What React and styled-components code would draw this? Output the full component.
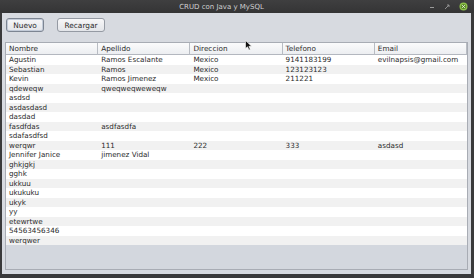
import React from 'react';
import styled, { createGlobalStyle } from 'styled-components';

const GlobalStyle = createGlobalStyle`
  html, body {
    margin: 0;
    padding: 0;
    background: #2e2e2e;
  }
`

const Window = styled.div`
  position: relative;
  width: 474px;
  height: 278px;
  display: flex;
  flex-direction: column;
  background: #3a3a3b;
  font-family: "DejaVu Sans", Verdana, sans-serif;
  overflow: hidden;
`
const TitleBar = styled.div`
  height: 13px;
  display: flex;
  align-items: center;
  padding: 0 6px 0 0;
  background: linear-gradient(#3f3f40, #343435);
`
const Title = styled.div`
  flex: 1;
  text-align: center;
  padding-left: 14px;
  font-size: 7px;
  color: #cfd0d2;
`
const Controls = styled.div`
  display: flex;
  align-items: center;
  gap: 9px;
`
const Content = styled.div`
  flex: 1;
  display: flex;
  flex-direction: column;
  margin: 0 3px 4px 2px;
  padding: 5px 3px 4px 3px;
  background: #d7dae0;
`
const Toolbar = styled.div`
  display: flex;
  gap: 13px;
  padding-left: 1px;
`
const Button = styled.button`
  height: 14px;
  width: ${p => p.$w}px;
  padding: 0;
  border-radius: 3px;
  border: 1px solid ${p => (p.$focused ? '#7d8592' : '#959aa3')};
  box-shadow: ${p => (p.$focused ? 'inset 0 0 0 1px #c3cbd8' : 'none')};
  background: linear-gradient(#f7f7f8, #e3e5e9);
  font-family: "DejaVu Sans", Verdana, sans-serif;
  font-size: 7.4px;
  color: #2b2b2b;
`
const ScrollPane = styled.div`
  flex: 1;
  margin-top: 10px;
  border: 1px solid #a8acb4;
  background: #d3d7de;
  display: flex;
  flex-direction: column;
`
const Grid = styled.div`
  display: grid;
  grid-template-columns: repeat(5, 1fr);
`
const HeadCell = styled.div`
  height: 12px;
  box-sizing: border-box;
  padding-left: 3px;
  line-height: 12px;
  font-size: 7.3px;
  color: #2c2c2c;
  background: linear-gradient(#fbfbfc, #eceef1);
  border-right: 1px solid #b8bcc3;
  border-bottom: 1px solid #b3b7bf;
  &:last-child { border-right: none; }
`
const Cell = styled.div`
  height: 9.5px;
  line-height: 9.5px;
  padding-left: 3px;
  font-size: 7.2px;
  color: #2a2a2a;
  white-space: nowrap;
  overflow: hidden;
  background: ${p => (p.$odd ? '#f1f1f1' : '#ffffff')};
`
const Cursor = styled.svg`
  position: absolute;
  left: 245px;
  top: 40px;
`

const rows = [
  ['Agustin', 'Ramos Escalante', 'Mexico', '9141183199', 'evilnapsis@gmail.com'],
  ['Sebastian', 'Ramos', 'Mexico', '123123123', ''],
  ['Kevin', 'Ramos Jimenez', 'Mexico', '211221', ''],
  ['qdeweqw', 'qweqweqweweqw', '', '', ''],
  ['asdsd', '', '', '', ''],
  ['asdasdasd', '', '', '', ''],
  ['dasdad', '', '', '', ''],
  ['fasdfdas', 'asdfasdfa', '', '', ''],
  ['sdafasdfsd', '', '', '', ''],
  ['werqwr', '111', '222', '333', 'asdasd'],
  ['Jennifer Janice', 'jimenez Vidal', '', '', ''],
  ['ghkjgkj', '', '', '', ''],
  ['gghk', '', '', '', ''],
  ['ukkuu', '', '', '', ''],
  ['ukukuku', '', '', '', ''],
  ['ukyk', '', '', '', ''],
  ['yy', '', '', '', ''],
  ['etewrtwe', '', '', '', ''],
  ['54563456346', '', '', '', ''],
  ['werqwer', '', '', '', ''],
]

const headers = ['Nombre', 'Apellido', 'Direccion', 'Telefono', 'Email']

export default function App() {
  return (
    <>
      <GlobalStyle />
      <Window>
        <TitleBar>
          <Title>CRUD con Java y MySQL</Title>
          <Controls>
            <svg width="6" height="6" viewBox="0 0 6 6">
              <rect x="1" y="3" width="4" height="1" fill="#9a9a9a" />
            </svg>
            <svg width="6" height="6" viewBox="0 0 6 6">
              <path d="M1 5 L5 1 M3 1 H5 V3" stroke="#9a9a9a" strokeWidth="0.9" fill="none" />
            </svg>
            <svg width="9" height="9" viewBox="0 0 9 9">
              <circle cx="4.5" cy="4.5" r="4" fill="#8cc04a" />
              <circle cx="4.5" cy="4.5" r="2.6" fill="#5d8a2a" />
              <path d="M3.2 3.2 L5.8 5.8 M5.8 3.2 L3.2 5.8" stroke="#e8f3d8" strokeWidth="1" />
            </svg>
          </Controls>
        </TitleBar>
        <Content>
          <Toolbar>
            <Button $w={38} $focused>Nuevo</Button>
            <Button $w={48}>Recargar</Button>
          </Toolbar>
          <ScrollPane>
            <Grid>
              {headers.map(h => (
                <HeadCell key={h}>{h}</HeadCell>
              ))}
              {rows.map((r, i) =>
                r.map((c, j) => (
                  <Cell key={i + '-' + j} $odd={i % 2 === 1}>{c}</Cell>
                ))
              )}
            </Grid>
          </ScrollPane>
        </Content>
        <Cursor width="8" height="11" viewBox="0 0 8 11">
          <path d="M0.5 0.5 L0.5 8.5 L2.5 6.8 L4 10 L5.3 9.4 L3.9 6.3 L6.6 6.3 Z" fill="#111" stroke="#fff" strokeWidth="0.6" />
        </Cursor>
      </Window>
    </>
  );
}
